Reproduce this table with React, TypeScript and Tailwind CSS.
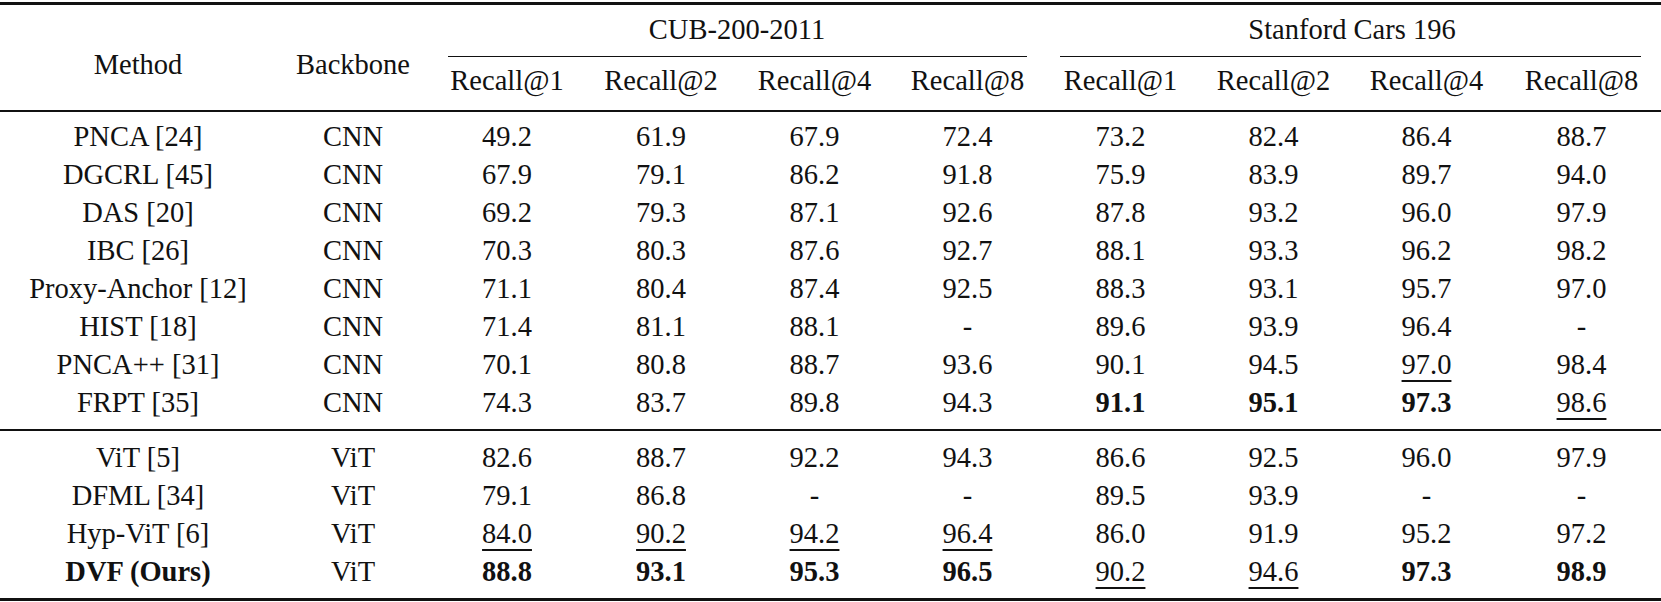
const cnn = [
  ["PNCA [24]", "CNN", "49.2", "61.9", "67.9", "72.4", "73.2", "82.4", "86.4", "88.7"],
  ["DGCRL [45]", "CNN", "67.9", "79.1", "86.2", "91.8", "75.9", "83.9", "89.7", "94.0"],
  ["DAS [20]", "CNN", "69.2", "79.3", "87.1", "92.6", "87.8", "93.2", "96.0", "97.9"],
  ["IBC [26]", "CNN", "70.3", "80.3", "87.6", "92.7", "88.1", "93.3", "96.2", "98.2"],
  ["Proxy-Anchor [12]", "CNN", "71.1", "80.4", "87.4", "92.5", "88.3", "93.1", "95.7", "97.0"],
  ["HIST [18]", "CNN", "71.4", "81.1", "88.1", "-", "89.6", "93.9", "96.4", "-"],
  ["PNCA++ [31]", "CNN", "70.1", "80.8", "88.7", "93.6", "90.1", "94.5", "_97.0", "98.4"],
  ["FRPT [35]", "CNN", "74.3", "83.7", "89.8", "94.3", "*91.1", "*95.1", "*97.3", "_98.6"],
];

const vit = [
  ["ViT [5]", "ViT", "82.6", "88.7", "92.2", "94.3", "86.6", "92.5", "96.0", "97.9"],
  ["DFML [34]", "ViT", "79.1", "86.8", "-", "-", "89.5", "93.9", "-", "-"],
  ["Hyp-ViT [6]", "ViT", "_84.0", "_90.2", "_94.2", "_96.4", "86.0", "91.9", "95.2", "97.2"],
  ["*DVF (Ours)", "ViT", "*88.8", "*93.1", "*95.3", "*96.5", "_90.2", "_94.6", "*97.3", "*98.9"],
];

const cols = "grid grid-cols-[276px_154px_154px_154px_153px_153px_153px_153px_153px_157px]";
const recalls = ["Recall@1", "Recall@2", "Recall@4", "Recall@8"];

function Cell({ v }: { v: string }) {
  let text = v;
  let cls = "";
  if (v.startsWith("*")) {
    text = v.slice(1);
    cls = "font-bold";
  } else if (v.startsWith("_")) {
    text = v.slice(1);
    cls = "underline decoration-[1.5px] underline-offset-[6px]";
  }
  return (
    <div className="flex items-center justify-center whitespace-nowrap">
      <span className={cls}>{text}</span>
    </div>
  );
}

function Rows({ data }: { data: string[][] }) {
  return (
    <>
      {data.map((row, i) => (
        <div key={i} className={`${cols} h-[38px]`}>
          {row.map((v, j) => (
            <Cell key={j} v={v} />
          ))}
        </div>
      ))}
    </>
  );
}

export default function App() {
  return (
    <div className="w-[1661px] h-[602px] bg-white text-[#111] pt-[2px] font-['Liberation_Serif',serif] text-[28.5px] leading-none">
      <div className="border-t-[3px] border-[#111]" />

      {/* header */}
      <div className={`${cols} grid-rows-[52px_53px]`}>
        <div className="row-span-2 flex items-center justify-center pt-[15px]">Method</div>
        <div className="row-span-2 flex items-center justify-center pt-[15px]">Backbone</div>
        <div className="col-span-4 flex flex-col">
          <div className="flex-1 flex items-center justify-center">CUB-200-2011</div>
          <div className="ml-[18px] mr-[17px] h-px bg-[#111]" />
        </div>
        <div className="col-span-4 flex flex-col">
          <div className="flex-1 flex items-center justify-center">Stanford Cars 196</div>
          <div className="ml-[16px] mr-[19px] h-px bg-[#111]" />
        </div>
        {[...recalls, ...recalls].map((r, i) => (
          <div key={i} className="flex items-center justify-center pb-[4px]">
            {r}
          </div>
        ))}
      </div>
      <div className="border-t-2 border-[#111]" />

      <div className="pt-[6px] pb-[7px]">
        <Rows data={cnn} />
      </div>
      <div className="border-t-2 border-[#111]" />

      <div className="pt-[8px] pb-[7px]">
        <Rows data={vit} />
      </div>
      <div className="border-t-[3px] border-[#111]" />
    </div>
  );
}
